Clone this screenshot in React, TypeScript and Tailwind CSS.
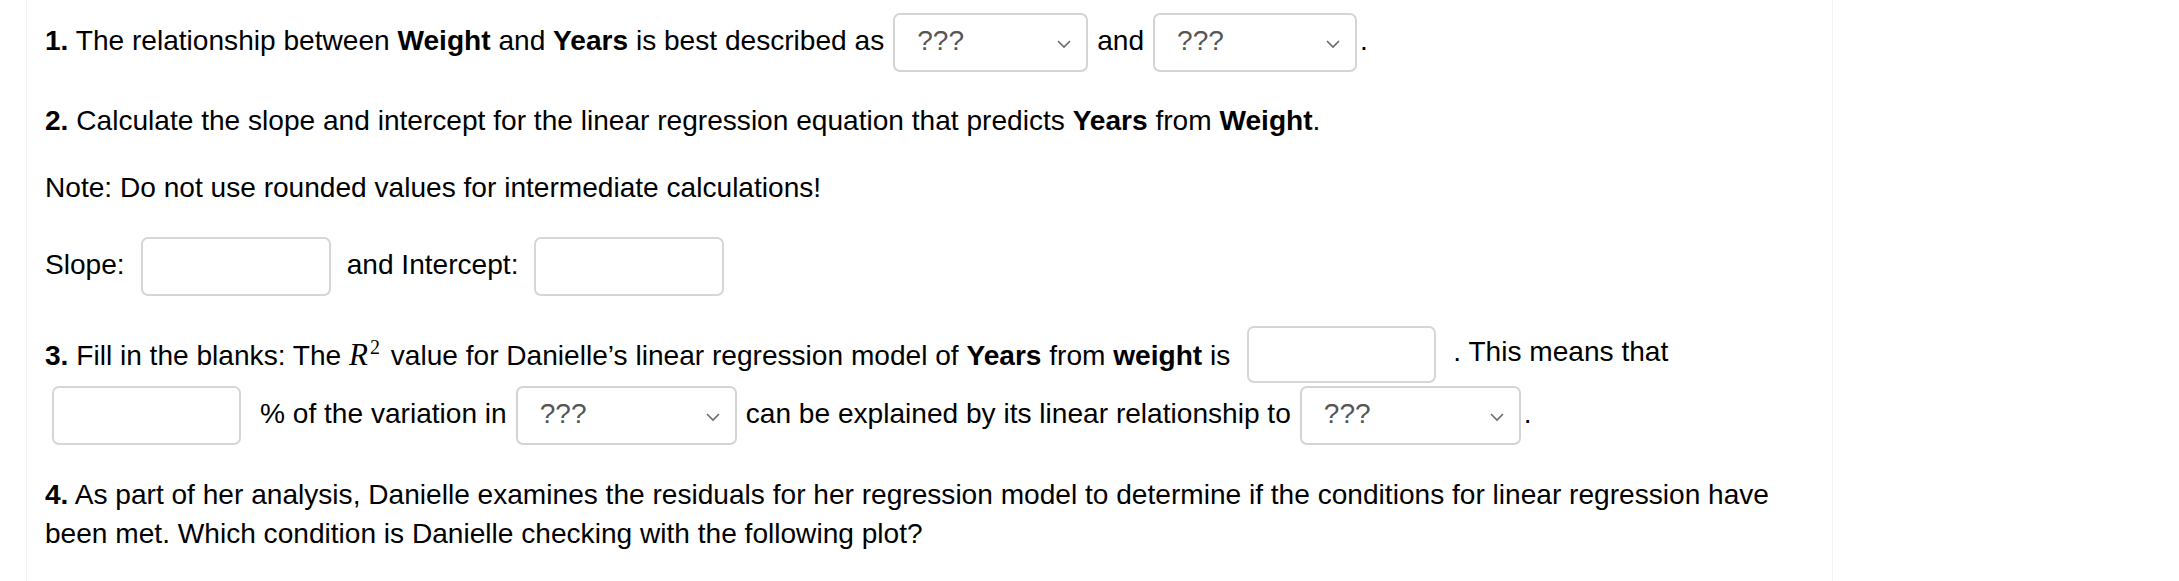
import React from 'react'

function Select({ w }: { w: string }) {
  return (
    <div
      className={`${w} h-[59px] shrink-0 flex items-center justify-between rounded-[7px] border-2 border-[#d4d4d4] bg-white pl-[22px] pr-[14px] text-[#555]`}
    >
      <span className="pb-[4px]">???</span>
      <svg width="16" height="10" viewBox="0 0 16 10" className="mt-[2px]">
        <path d="M2 2 L8 8 L14 2" fill="none" stroke="#6b6b6b" strokeWidth="1.6" />
      </svg>
    </div>
  )
}

function Box({ w, h = 'h-[59px]' }: { w: string; h?: string }) {
  return <div className={`${w} ${h} shrink-0 rounded-[7px] border-2 border-[#d6d6d6] bg-white`} />
}

const serif = { fontFamily: '"Liberation Serif", "Times New Roman", serif' }

export default function App() {
  return (
    <div
      className="bg-white text-black min-h-[581px] w-[2179px]"
      style={{ fontFamily: '"Liberation Sans", Arial, Helvetica, sans-serif' }}
    >
      <div className="ml-[26px] w-[1807px] min-h-[581px] border-x border-[#f3f3f3] pl-[18px] pt-[13px] text-[28.1px] leading-[40px]">
        {/* 1 */}
        <div className="flex items-center gap-[9px] h-[59px] whitespace-pre">
          <span className="pb-[4px]">
            <b>1.</b> The relationship between <b>Weight</b> and <b>Years</b> is best described as
          </span>
          <Select w="w-[195px]" />
          <span className="pb-[4px]">and</span>
          <div className="flex items-center">
            <Select w="w-[204px]" />
            <span className="pl-[3px] pb-[4px]">.</span>
          </div>
        </div>

        {/* 2 */}
        <p className="mt-[29px] whitespace-pre">
          <b>2.</b> Calculate the slope and intercept for the linear regression equation that predicts <b>Years</b> from <b>Weight</b>.
        </p>
        <p className="mt-[27px]">Note: Do not use rounded values for intermediate calculations!</p>

        <div className="flex items-center gap-[16px] mt-[29px]">
          <span className="pb-[4px]">Slope:</span>
          <Box w="w-[190px]" />
          <span className="pb-[4px]">and Intercept:</span>
          <Box w="w-[190px]" />
        </div>

        {/* 3 */}
        <div className="flex items-center gap-[17px] mt-[30px] whitespace-pre">
          <span className="pb-[6px]">
            <b>3.</b> Fill in the blanks: The{' '}
            <span style={serif} className="italic text-[31px]">
              R
            </span>
            <span style={serif} className="ml-[2px] mr-[3px] text-[20px] align-[0.55em]">
              2
            </span>{' '}
            value for Danielle’s linear regression model of <b>Years</b> from <b>weight</b> is
          </span>
          <Box w="w-[189px]" h="h-[57px]" />
          <span className="pb-[6px]">. This means that</span>
        </div>
        <div className="flex items-center mt-[3px] whitespace-pre">
          <div className="pl-[7px] pr-[19px]">
            <Box w="w-[189px]" />
          </div>
          <div className="flex items-center gap-[9px]">
            <span className="pb-[4px]">% of the variation in</span>
            <Select w="w-[221px]" />
            <span className="pb-[4px]">can be explained by its linear relationship to</span>
            <div className="flex items-center">
              <Select w="w-[221px]" />
              <span className="pl-[3px] pb-[4px]">.</span>
            </div>
          </div>
        </div>

        {/* 4 */}
        <p className="mt-[30px] leading-[39px]">
          <b>4.</b> As part of her analysis, Danielle examines the residuals for her regression model to determine if the
          conditions for linear regression have
          <br />
          been met. Which condition is Danielle checking with the following plot?
        </p>
      </div>
    </div>
  )
}
